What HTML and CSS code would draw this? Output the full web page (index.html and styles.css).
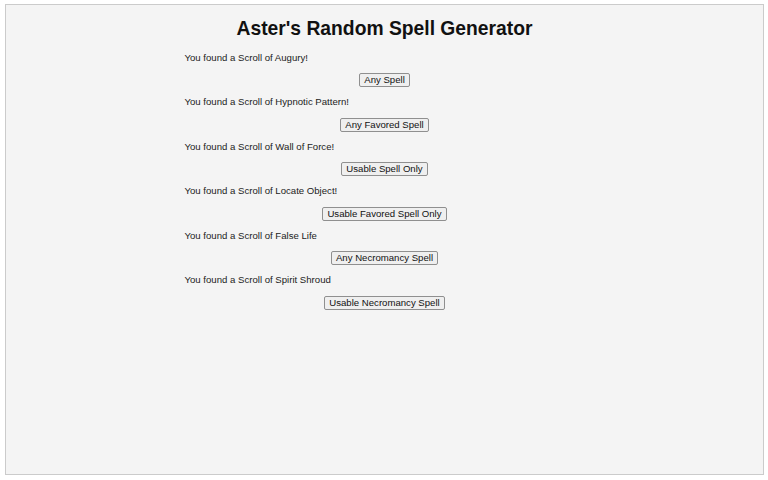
FILE: index.html
```html
<!DOCTYPE html>
<html lang="en">
<head>
    <meta charset="UTF-8">
    <meta name="viewport" content="width=device-width, initial-scale=1.0">
    <title>Aster's Random Spell Generator</title>
    <link rel="stylesheet" href="styles.css">
</head>
<body>
    <div class="container">
        <h1>Aster's Random Spell Generator</h1>
        <div class="spells">
            <p class="result">You found a Scroll of Augury!</p>
            <div class="action"><button type="button">Any Spell</button></div>
            <p class="result">You found a Scroll of Hypnotic Pattern!</p>
            <div class="action"><button type="button">Any Favored Spell</button></div>
            <p class="result">You found a Scroll of Wall of Force!</p>
            <div class="action"><button type="button">Usable Spell Only</button></div>
            <p class="result">You found a Scroll of Locate Object!</p>
            <div class="action"><button type="button">Usable Favored Spell Only</button></div>
            <p class="result">You found a Scroll of False Life</p>
            <div class="action"><button type="button">Any Necromancy Spell</button></div>
            <p class="result">You found a Scroll of Spirit Shroud</p>
            <div class="action"><button type="button">Usable Necromancy Spell</button></div>
        </div>
    </div>
</body>
</html>
```

FILE: styles.css
```css
body {
    font-family: "Liberation Sans", Arial, sans-serif;
    margin: 0;
    padding: 0;
    background-color: #fff;
}

.container {
    margin: 4px 4px 5px 5px;
    height: calc(100vh - 9px);
    box-sizing: border-box;
    border: 1px solid #cbcbcb;
    background-color: #f4f4f4;
    padding-top: 12.3px;
}

h1 {
    margin: 0 0 10.3px;
    text-align: center;
    font-size: 19.3px;
    line-height: 24px;
    color: #111;
}

.spells {
    width: 400px;
    margin: 0 auto;
}

.result {
    margin: 0 0 10.65px;
    font-size: 9.6px;
    line-height: 11px;
    color: #222;
}

.action {
    display: flex;
    justify-content: center;
    margin-bottom: 8.85px;
}

button {
    font-family: "Liberation Sans", Arial, sans-serif;
    font-size: 9.6px;
    line-height: 10px;
    height: 14px;
    padding: 1px 4px;
    color: #111;
    background-color: #efefef;
    border: 1px solid #8f8f8f;
    border-radius: 2px;
    box-sizing: border-box;
}
```
